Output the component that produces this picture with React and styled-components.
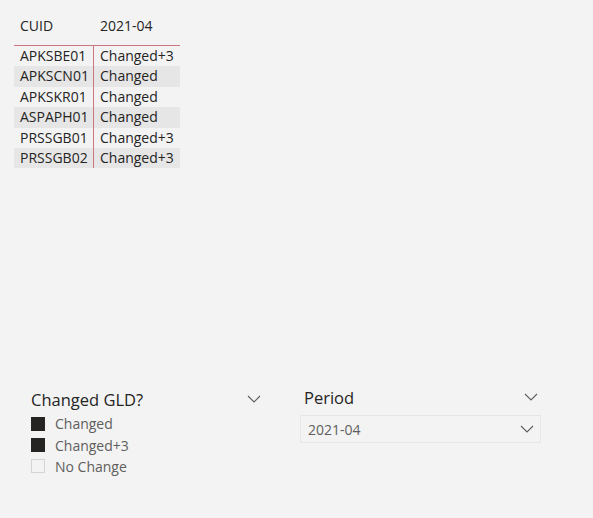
import React from "react";
import styled, { createGlobalStyle } from "styled-components";

const Global = createGlobalStyle`
  html, body {
    margin: 0;
    padding: 0;
    background: #f3f3f3;
  }
  body {
    font-family: "Segoe UI", "Open Sans", "Noto Sans", sans-serif;
    width: 593px;
    height: 518px;
    overflow: hidden;
  }
`;

const Page = styled.div`
  width: 593px;
  height: 518px;
  background: #f3f3f3;
  display: flex;
  flex-direction: column;
  justify-content: space-between;
  padding: 14px 0 0 14px;
  box-sizing: border-box;
`;

const Table = styled.div`
  width: 166px;
  display: grid;
  grid-template-columns: 80px 86px;
  font-size: 14px;
  color: #252423;
`;

const HeadCell = styled.div`
  height: 32px;
  padding-left: 6px;
  padding-top: 2px;
  box-sizing: border-box;
  border-bottom: 1px solid #c8787e;
`;

const Cell = styled.div`
  height: 20.4px;
  line-height: 20px;
  padding-left: 6px;
  background: ${(p) => (p.$alt ? "#e6e6e6" : "transparent")};
  border-right: ${(p) => (p.$first ? "1px solid #c8787e" : "none")};
  white-space: nowrap;
`;

const Bottom = styled.div`
  display: flex;
  padding: 0 0 41px 17px;
  gap: 43px;
`;

const Slicer = styled.div`
  width: ${(p) => p.$w}px;
  margin-top: ${(p) => p.$top || 0}px;
`;

const SlicerHead = styled.div`
  display: flex;
  align-items: center;
  justify-content: space-between;
  height: 22px;
  margin-bottom: ${(p) => p.$mb || 0}px;
`;

const Title = styled.div`
  font-size: 16.5px;
  color: #252423;
`;

const Item = styled.div`
  display: flex;
  align-items: center;
  height: 21.3px;
  font-size: 14px;
  color: #605e5c;
  gap: 10px;
`;

const Box = styled.span`
  width: 14px;
  height: 14px;
  box-sizing: border-box;
  background: ${(p) => (p.$on ? "#252423" : "#f3f3f3")};
  border: 1px solid ${(p) => (p.$on ? "#252423" : "#d4d4d4")};
`;

const Dropdown = styled.div`
  margin-top: 7px;
  margin-left: -4px;
  height: 28px;
  width: 241px;
  box-sizing: border-box;
  border: 1px solid #e6e6e6;
  display: flex;
  align-items: center;
  justify-content: space-between;
  padding: 0 6px 0 7px;
  font-size: 14px;
  color: #605e5c;
`;

const Chevron = () => (
  <svg width="14" height="8" viewBox="0 0 14 8">
    <path d="M1 1 L7 7 L13 1" fill="none" stroke="#605e5c" strokeWidth="1.1" />
  </svg>
);

const rows = [
  ["APKSBE01", "Changed+3"],
  ["APKSCN01", "Changed"],
  ["APKSKR01", "Changed"],
  ["ASPAPH01", "Changed"],
  ["PRSSGB01", "Changed+3"],
  ["PRSSGB02", "Changed+3"],
];

export default function App() {
  return (
    <>
      <Global />
      <Page>
        <Table>
          <HeadCell>CUID</HeadCell>
          <HeadCell>2021-04</HeadCell>
          {rows.map(([a, b], i) => (
            <React.Fragment key={a}>
              <Cell $first $alt={i % 2 === 1}>{a}</Cell>
              <Cell $alt={i % 2 === 1}>{b}</Cell>
            </React.Fragment>
          ))}
        </Table>
        <Bottom>
          <Slicer $w={230} $top={2}>
            <SlicerHead $mb={3}>
              <Title>Changed GLD?</Title>
              <Chevron />
            </SlicerHead>
            <Item><Box $on />Changed</Item>
            <Item><Box $on />Changed+3</Item>
            <Item><Box />No Change</Item>
          </Slicer>
          <Slicer $w={234}>
            <SlicerHead>
              <Title>Period</Title>
              <Chevron />
            </SlicerHead>
            <Dropdown>
              2021-04
              <Chevron />
            </Dropdown>
          </Slicer>
        </Bottom>
      </Page>
    </>
  );
}
